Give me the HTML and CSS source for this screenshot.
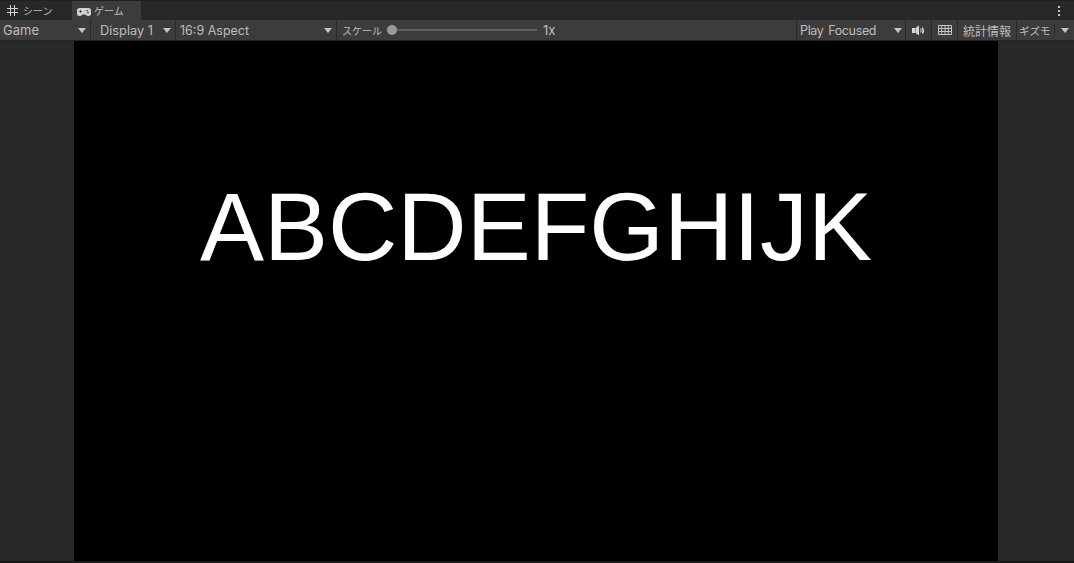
FILE: index.html
```html
<!DOCTYPE html>
<html lang="ja">
<head>
    <meta charset="UTF-8">
    <meta name="viewport" content="width=device-width, initial-scale=1.0">
    <title>Game</title>
    <link rel="stylesheet" href="styles.css">
</head>
<body>
    <div class="tabbar">
        <div class="tab">
            <svg class="tab-icon" width="11" height="11" viewBox="0 0 11 11"><path d="M3.5 0v11M7.500 0v11M0 3.500h11M0 7.500h11" stroke="#d0d0d0" stroke-width="1" fill="none"/></svg>
            <span>シーン</span>
        </div>
        <div class="tab active">
            <svg class="tab-icon gamepad" width="14" height="8" viewBox="0 0 14 8"><path d="M3.500 0h7a3.500 3.500 0 0 1 .5 8c-1.200 0-1.900-.8-2.600-1.500H5.600C4.900 7.200 4.200 8 3 8a3.500 3.500 0 0 1 .5-8z" fill="#d0d0d0"/><path d="M2.300 3.500h2.400M3.500 2.300v2.400" stroke="#383838" stroke-width="1"/><circle cx="10" cy="2.800" r=".8" fill="#383838"/><circle cx="11" cy="4.600" r=".8" fill="#383838"/></svg>
            <span>ゲーム</span>
        </div>
        <button class="menu-dots"><i></i><i></i><i></i></button>
    </div>

    <div class="toolbar">
        <div class="drop game-drop"><span>Game</span><b class="arrow"></b></div>
        <div class="drop display-drop"><span>Display 1</span><b class="arrow"></b></div>
        <div class="drop aspect-drop"><span>16:9 Aspect</span><b class="arrow"></b></div>
        <div class="scale">
            <span class="scale-label">スケール</span>
            <div class="slider"><b class="thumb"></b></div>
            <span class="scale-value">1x</span>
        </div>
        <div class="drop play-drop"><span>Play Focused</span><b class="arrow"></b></div>
        <div class="tool audio">
            <svg width="13" height="11" viewBox="0 0 13 11"><path d="M0 3h3v5H0zM3.500 3 7 .5v10L3.500 8z" fill="#d8d8d8"/><path d="M8.700 3.500q.8 2 0 4" stroke="#d8d8d8" stroke-width="1" fill="none"/><path d="M10.500 2.500q1.500 3 0 6" stroke="#d8d8d8" stroke-width="1.500" fill="none"/></svg>
        </div>
        <div class="tool keys">
            <svg width="14" height="10" viewBox="0 0 14 10"><path d="M.5.500h13v9H.5zM.5 3.500h13M.5 6.500h13M3.700.500v9M7 .500v9M10.300.500v9" stroke="#c4c4c4" stroke-width="1" fill="none"/></svg>
        </div>
        <div class="tool stats">統計情報</div>
        <div class="tool gizmo"><span class="gizmo-label">ギズモ</span><span class="gizmo-arrow"><b class="arrow"></b></span></div>
    </div>

    <div class="view">
        <div class="stage">
            <div class="stage-text">ABCDEFGHIJK</div>
        </div>
    </div>
    <div class="footer"></div>
</body>
</html>
```

FILE: styles.css
```css
*, *::before, *::after{
    box-sizing: border-box;
}
html, body{
    height: 100%;
}
body{
    margin: 0;
    background: #191919;
    font-family: "Inter", "Noto Sans CJK JP", sans-serif;
    font-size: 12px;
    color: #bcbcbc;
    overflow: hidden;
    display: flex;
    flex-direction: column;
}
.tabbar{
    height: 20px;
    flex: none;
    display: flex;
    align-items: flex-end;
    background: #282828;
    border-top: 1px solid #1f1f1f;
}
.tab{
    height: 19px;
    display: flex;
    align-items: center;
    gap: 5px;
    padding: 0 10px 0 7px;
    background: #282828;
    font-size: 10px;
    font-family: "Noto Sans CJK JP", sans-serif;
    color: #bdbdbd;
}
.tab:first-child{
    width: 72px;
}
.tab.active{
    width: 69px;
    padding-left: 5px;
    gap: 3px;
    background: #3c3c3c;
}
.tab-icon{
    flex: none;
}
.gamepad{
    margin-top: 2px;
}
.menu-dots{
    margin: 0 14px 0 auto;
    align-self: center;
    background: none;
    border: none;
    padding: 0;
    display: flex;
    flex-direction: column;
    gap: 2px;
}
.menu-dots i{
    display: block;
    width: 2px;
    height: 2px;
    background: #c4c4c4;
}
.toolbar{
    height: 21px;
    flex: none;
    display: flex;
    align-items: stretch;
    background: #3c3c3c;
    border-bottom: 1px solid #232323;
    font-size: 13px;
}
.drop{
    display: flex;
    align-items: center;
    justify-content: space-between;
    padding: 0 4px 0 3px;
    border-right: 1px solid #292929;
    background: #3c3c3c;
}
.arrow{
    display: block;
    width: 0;
    height: 0;
    border-left: 4px solid transparent;
    border-right: 4px solid transparent;
    border-top: 5px solid #c4c4c4;
}
.game-drop{
    width: 91px;
}
.display-drop{
    width: 85px;
    padding-left: 9px;
    font-size: 12.8px;
}
.aspect-drop{
    width: 161px;
    padding-left: 4px;
    font-size: 12.5px;
}
.scale{
    flex: 1;
    display: flex;
    align-items: center;
    padding-left: 5px;
    min-width: 0;
}
.scale-label{
    font-family: "Noto Sans CJK JP", sans-serif;
    font-size: 10px;
    flex: none;
    width: 45px;
    white-space: nowrap;
}
.slider{
    width: 150px;
    height: 2px;
    background: #5e5e5e;
    display: flex;
    align-items: center;
}
.thumb{
    display: block;
    width: 10px;
    height: 10px;
    border-radius: 50%;
    background: #999;
}
.scale-value{
    margin-left: 6px;
}
.play-drop{
    width: 110px;
    border-left: 1px solid #292929;
    font-size: 12.5px;
    letter-spacing: -.35px;
    word-spacing: 1.5px;
    padding-left: 3px;
    padding-right: 3px;
}
.tool{
    flex: none;
    display: flex;
    align-items: center;
    justify-content: center;
    border-right: 1px solid #292929;
    font-family: "Noto Sans CJK JP", sans-serif;
    font-size: 12px;
}
.audio{
    width: 26px;
}
.keys{
    width: 26px;
}
.stats{
    width: 59px;
}
.gizmo{
    width: 57px;
    border-right: none;
    justify-content: flex-start;
    padding-left: 2px;
    font-size: 10.5px;
    white-space: nowrap;
}
.gizmo-label{
    width: 35px;
}
.gizmo-arrow{
    height: 12px;
    flex: 1;
    display: flex;
    align-items: center;
    justify-content: center;
    border-left: 1px solid #292929;
}
.view{
    flex: 1;
    min-height: 0;
    display: flex;
    padding-left: 74px;
    background: #282828;
}
.stage{
    width: 924px;
    background: #000;
    display: flex;
    justify-content: center;
    padding-top: 131px;
}
.stage-text{
    font-family: "Liberation Sans", Arial, sans-serif;
    font-size: 96px;
    line-height: 110px;
    color: #fff;
    white-space: nowrap;
}
.footer{
    height: 2px;
    flex: none;
    background: #191919;
}
```
